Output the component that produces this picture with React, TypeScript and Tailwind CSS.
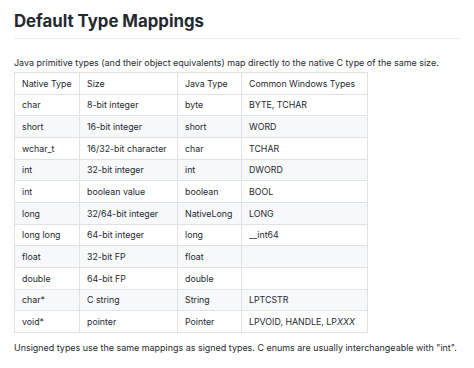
const rows: [string, string, string, React.ReactNode][] = [
  ['char', '8-bit integer', 'byte', 'BYTE, TCHAR'],
  ['short', '16-bit integer', 'short', 'WORD'],
  ['wchar_t', '16/32-bit character', 'char', 'TCHAR'],
  ['int', '32-bit integer', 'int', 'DWORD'],
  ['int', 'boolean value', 'boolean', 'BOOL'],
  ['long', '32/64-bit integer', 'NativeLong', 'LONG'],
  ['long long', '64-bit integer', 'long', '__int64'],
  ['float', '32-bit FP', 'float', ''],
  ['double', '64-bit FP', 'double', ''],
  ['char*', 'C string', 'String', 'LPTCSTR'],
  [
    'void*',
    'pointer',
    'Pointer',
    <>
      LPVOID, HANDLE, LP<em>XXX</em>
    </>,
  ],
]

const cell = 'border border-[#dfe2e5] px-[7px] h-[21.67px] py-0 text-left font-normal align-middle whitespace-nowrap'

const App = () => {
  return (
    <div className="bg-white text-[#24292e] px-[14px] font-['Inter',sans-serif] w-[474px] h-[368px] overflow-hidden">
      <h2 className="pt-[10px] pb-[6px] text-[16.8px] leading-[22px] font-bold border-b border-[#eaecef]">
        Default Type Mappings
      </h2>
      <p className="mt-[16px] text-[8.95px] leading-[16px]">
        Java primitive types (and their object equivalents) map directly to the native C type of the same size.
      </p>
      <table className="mt-[1px] table-fixed border-collapse text-[8.8px] w-[353px]">
        <thead>
          <tr className="bg-white">
            <th className={`${cell} w-[65px]`}>Native Type</th>
            <th className={`${cell} w-[98px]`}>Size</th>
            <th className={`${cell} w-[64px]`}>Java Type</th>
            <th className={`${cell} w-[126px]`}>Common Windows Types</th>
          </tr>
        </thead>
        <tbody>
          {rows.map((r, i) => (
            <tr key={i} className={i % 2 === 1 ? 'bg-[#f6f8fa]' : 'bg-white'}>
              {r.map((c, j) => (
                <td key={j} className={cell}>
                  {c}
                </td>
              ))}
            </tr>
          ))}
        </tbody>
      </table>
      <p className="mt-[7px] text-[8.95px] leading-[16px]">
        Unsigned types use the same mappings as signed types. C enums are usually interchangeable with "int".
      </p>
    </div>
  )
}

export default App
